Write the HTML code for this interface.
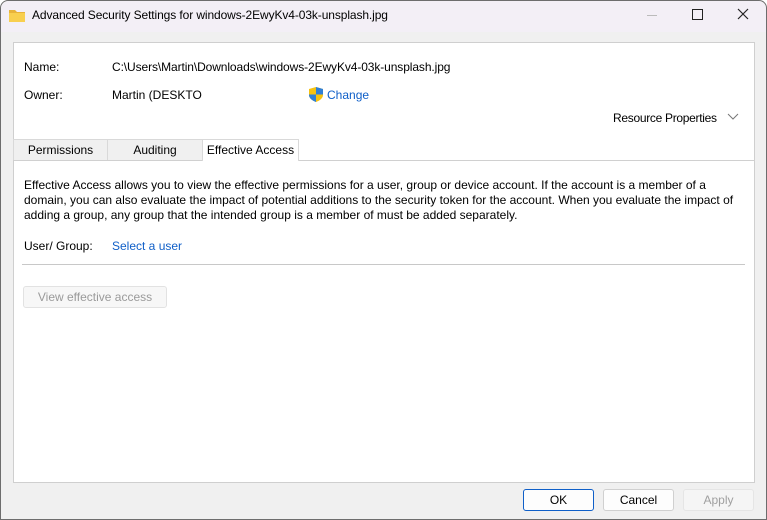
<!DOCTYPE html>
<html><head><style>
body{margin:0;width:767px;height:520px;overflow:hidden;font-family:"Liberation Sans",sans-serif;font-size:12px;color:#000;}
.win{position:absolute;left:0;top:0;width:767px;height:520px;background:#f0f0f0;box-shadow:inset 0 0 0 1px #6d6d6d;border-radius:8px 8px 0 0;overflow:hidden;}
.title{position:absolute;left:1px;top:1px;width:765px;height:31px;background:#f3eff6;border-radius:8px 8px 0 0;}
.t{position:absolute;white-space:nowrap;}
.panel{position:absolute;left:13px;top:42px;width:740px;height:439px;background:#fff;border:1px solid #cfcfcf;}
.tab{position:absolute;top:139px;height:20px;background:#f0f0f0;border:1px solid #d9d9d9;border-bottom:none;text-align:center;line-height:20px;}
.btn{position:absolute;height:20px;border:1px solid #d0d0d0;border-radius:3px;background:#fdfdfd;text-align:center;line-height:20px;}
</style></head><body>
<div class="win">
<div class="title"></div>
<svg style="position:absolute;left:9px;top:8px" width="16" height="14"><path d="M0 2h6l2 2h8v10H0z" fill="#e8b33a"/><path d="M0 5h16v9H0z" fill="#f8cf4f"/></svg>
<div class="t" style="left:32px;top:8px;letter-spacing:-0.1px">Advanced Security Settings for windows-2EwyKv4-03k-unsplash.jpg</div>
<div style="position:absolute;left:647px;top:15px;width:10px;height:1px;background:#bbb"></div>
<div style="position:absolute;left:692px;top:9px;width:9px;height:9px;border:1px solid #222"></div>
<svg style="position:absolute;left:737px;top:8px" width="12" height="12"><path d="M1 1L11 11M11 1L1 11" stroke="#222" stroke-width="1.2"/></svg>
<div class="panel"></div>
<div class="t" style="left:24px;top:60px">Name:</div>
<div class="t" style="left:112px;top:60px;letter-spacing:-0.1px">C:\Users\Martin\Downloads\windows-2EwyKv4-03k-unsplash.jpg</div>
<div class="t" style="left:24px;top:88px">Owner:</div>
<div class="t" style="left:112px;top:88px">Martin (DESKTO</div>
<svg style="position:absolute;left:309px;top:87px" width="14" height="15"><path d="M7 0L14 2V8C14 11 11 13.5 7 15C3 13.5 0 11 0 8V2Z" fill="#f5c211"/><path d="M7 0L14 2V7.5H7ZM0 7.5H7V15C3 13.5 0 11 0 8Z" fill="#2f7fd6"/></svg>
<div class="t" style="left:327px;top:88px;color:#0f5fc8">Change</div>
<div class="t" style="left:613px;top:111px;letter-spacing:-0.3px">Resource Properties</div>
<svg style="position:absolute;left:727px;top:113px" width="12" height="8"><path d="M1 1L6 6L11 1" stroke="#777" fill="none"/></svg>
<div style="position:absolute;left:14px;top:160px;width:740px;height:1px;background:#d0d0d0"></div>
<div class="tab" style="left:13px;width:93px">Permissions</div>
<div class="tab" style="left:107px;width:94px">Auditing</div>
<div class="tab" style="left:202px;width:95px;background:#fff;height:21px">Effective Access</div>
<div class="t" style="left:24px;top:178px;line-height:15px">Effective Access allows you to view the effective permissions for a user, group or device account. If the account is a member of a<br>domain, you can also evaluate the impact of potential additions to the security token for the account. When you evaluate the impact of<br>adding a group, any group that the intended group is a member of must be added separately.</div>
<div class="t" style="left:24px;top:239px">User/ Group:</div>
<div class="t" style="left:112px;top:239px;color:#0f5fc8">Select a user</div>
<div style="position:absolute;left:22px;top:264px;width:723px;height:1px;background:#c8c8c8"></div>
<div class="btn" style="left:23px;top:286px;width:142px;background:#f7f7f7;color:#9a9a9a;border-color:#e2e2e2">View effective access</div>
<div class="btn" style="left:523px;top:489px;width:69px;border:1px solid #0f5fc8">OK</div>
<div class="btn" style="left:603px;top:489px;width:69px">Cancel</div>
<div class="btn" style="left:683px;top:489px;width:69px;background:#f5f5f5;color:#a0a0a0;border-color:#e5e5e5">Apply</div>
</div>
</body></html>
